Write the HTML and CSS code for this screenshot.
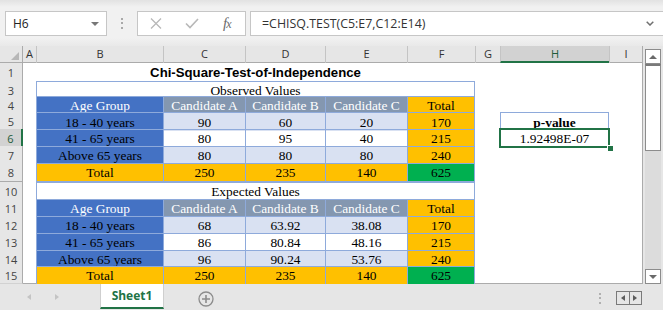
FILE: index.html
```html
<!DOCTYPE html>
<html lang="en">
<head>
	<meta charset="UTF-8">
	<title>Chi-Square-Test-of-Independence</title>
	<link rel="stylesheet" href="styles.css">
</head>
<body>
	<div class="formula-bar">
		<div class="name-box"><span>H6</span><span class="caret"></span></div>
		<div class="grip"></div>
		<div class="fx-box">
			<svg class="ico-x" width="12" height="11" viewBox="0 0 12 11"><path d="M1 0.5L11 10.5M11 0.5L1 10.5" stroke="#b8b8b8" stroke-width="1.3" fill="none"/></svg>
			<svg class="ico-ok" width="14" height="11" viewBox="0 0 14 11"><path d="M1 5.5L5 9.5L13 1" stroke="#b8b8b8" stroke-width="1.6" fill="none"/></svg>
			<span class="fx">f<i>x</i></span>
		</div>
		<div class="formula">
			<span>=CHISQ.TEST(C5:E7,C12:E14)</span>
			<svg width="8" height="5" viewBox="0 0 8 5"><path d="M0.7 0.7L4 4L7.3 0.7" stroke="#707070" stroke-width="1.5" fill="none"/></svg>
		</div>
	</div>

	<div class="sheet">
		<div class="grid">
			<div class="row head">
				<div class="corner"><span></span></div>
				<div class="ch first">A</div>
				<div class="ch">B</div>
				<div class="ch">C</div>
				<div class="ch">D</div>
				<div class="ch">E</div>
				<div class="ch">F</div>
				<div class="ch">G</div>
				<div class="ch sel">H</div>
				<div class="ch">I</div>
			</div>

			<div class="row h18">
				<div class="rh">1</div><div></div>
				<div class="title span5">Chi-Square-Test-of-Independence</div>
				<div></div><div></div><div></div>
			</div>

			<div class="row h15">
				<div class="rh">3</div><div></div>
				<div class="t top last span5">Observed Values</div>
				<div></div><div></div><div></div>
			</div>
			<div class="row h16">
				<div class="rh">4</div><div></div>
				<div class="t blue wt">Age Group</div>
				<div class="t slate wt">Candidate A</div>
				<div class="t slate wt">Candidate B</div>
				<div class="t slate wt">Candidate C</div>
				<div class="t orange last">Total</div>
				<div></div><div></div><div></div>
			</div>
			<div class="row">
				<div class="rh">5</div><div></div>
				<div class="t blue">18 - 40 years</div>
				<div class="t light">90</div>
				<div class="t light">60</div>
				<div class="t light">20</div>
				<div class="t orange last">170</div>
				<div></div>
				<div class="pv-head">p-value</div>
				<div></div>
			</div>
			<div class="row">
				<div class="rh sel">6</div><div></div>
				<div class="t blue">41 - 65 years</div>
				<div class="t">80</div>
				<div class="t">95</div>
				<div class="t">40</div>
				<div class="t orange last">215</div>
				<div></div>
				<div class="pv-cell">1.92498E-07</div>
				<div></div>
			</div>
			<div class="row">
				<div class="rh">7</div><div></div>
				<div class="t blue">Above 65 years</div>
				<div class="t light">80</div>
				<div class="t light">80</div>
				<div class="t light">80</div>
				<div class="t orange last">240</div>
				<div></div><div></div><div></div>
			</div>
			<div class="row">
				<div class="rh">8</div><div></div>
				<div class="t orange bottom">Total</div>
				<div class="t orange bottom">250</div>
				<div class="t orange bottom">235</div>
				<div class="t orange bottom">140</div>
				<div class="t green last bottom">625</div>
				<div></div><div></div><div></div>
			</div>

			<div class="row hidden"><div class="rh"></div></div>

			<div class="row">
				<div class="rh">10</div><div></div>
				<div class="t top last span5">Expected Values</div>
				<div></div><div></div><div></div>
			</div>
			<div class="row">
				<div class="rh">11</div><div></div>
				<div class="t blue wt">Age Group</div>
				<div class="t slate wt">Candidate A</div>
				<div class="t slate wt">Candidate B</div>
				<div class="t slate wt">Candidate C</div>
				<div class="t orange last">Total</div>
				<div></div><div></div><div></div>
			</div>
			<div class="row">
				<div class="rh">12</div><div></div>
				<div class="t blue">18 - 40 years</div>
				<div class="t light">68</div>
				<div class="t light">63.92</div>
				<div class="t light">38.08</div>
				<div class="t orange last">170</div>
				<div></div><div></div><div></div>
			</div>
			<div class="row">
				<div class="rh">13</div><div></div>
				<div class="t blue">41 - 65 years</div>
				<div class="t">86</div>
				<div class="t">80.84</div>
				<div class="t">48.16</div>
				<div class="t orange last">215</div>
				<div></div><div></div><div></div>
			</div>
			<div class="row h16">
				<div class="rh">14</div><div></div>
				<div class="t blue">Above 65 years</div>
				<div class="t light">96</div>
				<div class="t light">90.24</div>
				<div class="t light">53.76</div>
				<div class="t orange last">240</div>
				<div></div><div></div><div></div>
			</div>
			<div class="row">
				<div class="rh">15</div><div></div>
				<div class="t orange">Total</div>
				<div class="t orange">250</div>
				<div class="t orange">235</div>
				<div class="t orange">140</div>
				<div class="t green last">625</div>
				<div></div><div></div><div></div>
			</div>
		</div>

		<div class="vscroll">
			<div class="sb-btn"><span class="tri-up"></span></div>
			<div class="thumb"></div>
			<div class="track"></div>
			<div class="sb-btn down"><span class="tri-down"></span></div>
		</div>
	</div>

	<div class="tabs">
		<div class="tab-nav"><span class="tri-l"></span><span class="tri-r"></span></div>
		<div class="tab">Sheet1</div>
		<svg class="add" width="16" height="16" viewBox="0 0 16 16"><circle cx="8" cy="8" r="7" stroke="#8c8c8c" stroke-width="1.3" fill="none"/><path d="M8 4V12M4 8H12" stroke="#8c8c8c" stroke-width="1.6"/></svg>
		<div class="spacer"></div>
		<div class="grip small"></div>
		<div class="hnav">
			<div class="hbtn"><span class="tri-l dark"></span></div>
			<div class="hbtn"><span class="tri-r dark"></span></div>
		</div>
	</div>
</body>
</html>
```

FILE: styles.css
```css
html,body{
	margin:0;
}
body{
	width:663px;
	height:310px;
	overflow:hidden;
	background:#e6e6e6;
	font-family:"Open Sans","Noto Sans",sans-serif;
}

/* formula bar */
.formula-bar{
	display:flex;
	align-items:center;
	height:46px;
	box-sizing:border-box;
	padding:0 0 0 5px;
	background:linear-gradient(#e2e2e2,#f1f1f1 7px,#f1f1f1 38px,#e9e9e9);
}
.name-box{
	width:102px;
	height:25px;
	margin-top:1px;
	box-sizing:border-box;
	background:#fff;
	border:1px solid #c6c6c6;
	display:flex;
	align-items:center;
	justify-content:space-between;
	padding:0 7px 0 7px;
	font-size:12px;
	color:#222;
}
.caret{
	border-left:4px solid transparent;
	border-right:4px solid transparent;
	border-top:4px solid #777;
}
.grip{
	width:2px;
	height:11px;
	margin:1px 14px 0 14px;
	background:repeating-linear-gradient(#a9a9a9 0 2px,transparent 2px 4.3px);
}
.fx-box{
	width:109px;
	height:25px;
	margin-top:1px;
	box-sizing:border-box;
	background:#fff;
	border:1px solid #c6c6c6;
	display:flex;
	align-items:center;
	padding-left:12px;
}
.ico-ok{
	margin-left:23px;
}
.fx{
	margin-left:24px;
	font-family:"Liberation Serif",serif;
	font-style:italic;
	font-size:15px;
	color:#6b6b6b;
	letter-spacing:-1px;
}
.fx i{
	font-size:12px;
}
.formula{
	flex:1;
	height:25px;
	margin:1px 0 0 4px;
	box-sizing:border-box;
	background:#fff;
	border:1px solid #c6c6c6;
	border-right:none;
	display:flex;
	align-items:center;
	justify-content:space-between;
	padding:0 9px 0 11px;
	font-size:12.4px;
	color:#333;
}

/* sheet */
.sheet{
	display:flex;
	height:238px;
}
.grid{
	width:642px;
	background:#fff;
	border-right:1px solid #ababab;
	border-bottom:1px solid #ababab;
}
.row{
	display:grid;
	grid-template-columns:23px 13px 127px 82px 80px 82px 68px 25px 109px 33px;
	height:17px;
}
.row.h18{ height:18px; }
.row.h16{ height:16px; }
.row.h15{ height:15px; }
.row.hidden{ height:2px; }
.row.head{
	background:#e6e6e6;
	border-bottom:1px solid #ababab;
	height:16px;
}
.corner{
	border-right:1px solid #ababab;
	display:flex;
	justify-content:flex-end;
	align-items:flex-end;
	padding:0 3px 3px 0;
}
.corner span{
	border-left:8px solid transparent;
	border-bottom:8px solid #b7b7b7;
}
.ch{
	border-left:1px solid #c4c4c4;
	font-size:11px;
	color:#333;
	text-align:center;
	line-height:16px;
}
.ch.first{
	border-left:none;
}
.ch.sel{
	background:#d2d2d2;
	color:#1f5c3a;
	border-bottom:2px solid #217346;
	line-height:15px;
}
.rh{
	background:#e6e6e6;
	border-right:1px solid #ababab;
	border-bottom:1px solid #d2d2d2;
	box-sizing:border-box;
	font-size:11px;
	color:#444;
	display:flex;
	align-items:center;
	justify-content:center;
	padding-top:1px;
}
.row.hidden .rh{
	border-bottom:1px solid #ababab;
}
.rh.sel{
	background:#d2d2d2;
	color:#1f5c3a;
	border-right:2px solid #217346;
}
.span5{
	grid-column:span 5;
}
.title{
	font-family:"Liberation Sans",Arial,sans-serif;
	font-weight:bold;
	font-size:13.2px;
	text-align:center;
	line-height:19px;
	color:#000;
}

/* table cells */
.t{
	box-sizing:border-box;
	border-left:1px solid #8eaadb;
	border-top:1px solid #8eaadb;
	font-family:"Liberation Serif","Times New Roman",serif;
	font-size:13.4px;
	color:#000;
	display:flex;
	align-items:center;
	justify-content:center;
	padding-top:1px;
	white-space:nowrap;
}
.t.last{ border-right:1px solid #8eaadb; }
.t.bottom{ border-bottom:1px solid #8eaadb; }
.blue{ background:#4472c4; }
.slate{ background:#8497b0; }
.light{ background:#d9e1f2; }
.orange{ background:#ffc000; }
.green{ background:#00b050; }
.wt{ color:#fff; }

.pv-head{
	box-sizing:border-box;
	border:1px solid #8eaadb;
	border-bottom:none;
	font-family:"Liberation Serif","Times New Roman",serif;
	font-weight:bold;
	font-size:13.4px;
	display:flex;
	align-items:center;
	justify-content:center;
	padding-top:2px;
}
.pv-cell{
	position:relative;
	font-family:"Liberation Serif","Times New Roman",serif;
	font-size:13.4px;
	display:flex;
	align-items:center;
	justify-content:center;
	padding-top:1px;
}
.pv-cell::before{
	content:"";
	position:absolute;
	left:-1px;
	top:-1px;
	right:-1px;
	bottom:-1px;
	border:2px solid #217346;
}
.pv-cell::after{
	content:"";
	position:absolute;
	right:-4px;
	bottom:-4px;
	width:5px;
	height:5px;
	background:#217346;
	border:1px solid #fff;
	border-right:none;
	border-bottom:none;
}

/* vertical scrollbar */
.vscroll{
	width:20px;
	display:flex;
	flex-direction:column;
	padding:3px 2px 0 2px;
	box-sizing:border-box;
}
.sb-btn{
	height:15px;
	box-sizing:border-box;
	background:#fff;
	border:1px solid #8c8c8c;
	display:flex;
	align-items:center;
	justify-content:center;
}
.sb-btn.down{
	height:15px;
	margin-bottom:0;
}
.thumb{
	height:87px;
	box-sizing:border-box;
	background:#fff;
	border:1px solid #8c8c8c;
	border-top:2px solid #7a7a7a;
}
.track{
	flex:1;
	background:#dcdcdc;
}
.tri-up{
	border-left:4px solid transparent;
	border-right:4px solid transparent;
	border-bottom:4px solid #6a6a6a;
}
.tri-down{
	border-left:4px solid transparent;
	border-right:4px solid transparent;
	border-top:4px solid #6a6a6a;
}

/* sheet tabs */
.tabs{
	display:flex;
	align-items:center;
	height:26px;
}
.tab-nav{
	width:100px;
	display:flex;
	align-items:center;
	padding-left:27px;
	box-sizing:border-box;
}
.tri-l{
	border-top:3.5px solid transparent;
	border-bottom:3.5px solid transparent;
	border-right:4px solid #c4c4c4;
}
.tri-r{
	border-top:3.5px solid transparent;
	border-bottom:3.5px solid transparent;
	border-left:4px solid #c4c4c4;
}
.tab-nav .tri-r{
	margin-left:24px;
}
.tri-l.dark{ border-right-color:#5c5c5c; }
.tri-r.dark{ border-left-color:#5c5c5c; }
.tab{
	align-self:flex-start;
	width:64px;
	height:25px;
	box-sizing:border-box;
	background:#fff;
	border-left:1px solid #cfcfcf;
	border-right:1px solid #cfcfcf;
	border-bottom:2px solid #217346;
	color:#217346;
	font-weight:bold;
	font-size:12px;
	text-align:center;
	line-height:23px;
}
.add{
	margin-left:34px;
	margin-top:3px;
}
.spacer{
	flex:1;
}
.grip.small{
	height:11px;
	margin:2px 15px 0 0;
	background:repeating-linear-gradient(#b0b0b0 0 2px,transparent 2px 4.3px);
}
.hnav{
	display:flex;
	width:26px;
	height:14px;
	margin:1px 21px 0 0;
	box-sizing:border-box;
	border:1px solid #7a7a7a;
}
.hbtn{
	flex:1;
	display:flex;
	align-items:center;
	justify-content:center;
}
.hbtn + .hbtn{
	border-left:1px solid #7a7a7a;
}
```
